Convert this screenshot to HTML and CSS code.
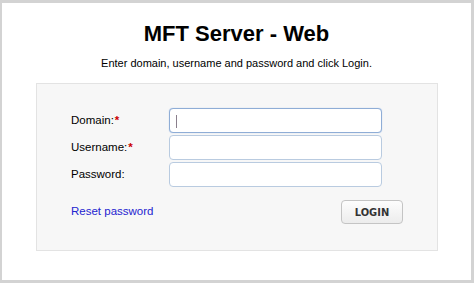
FILE: index.html
```html
<!DOCTYPE html>
<html lang="en">
<head>
    <meta charset="UTF-8">
    <title>MFT Server - Web</title>
    <link rel="stylesheet" href="styles.css">
</head>
<body>
<div id="page">
    <h1>MFT Server - Web</h1>
    <p class="intro">Enter domain, username and password and click Login.</p>
    <form class="login-box" action="javascript:;">
        <div class="fields">
            <label for="domain">Domain:<span class="req">*</span></label>
            <input type="text" id="domain" class="f-text focus">
            <label for="user">Username:<span class="req">*</span></label>
            <input type="text" id="user" class="f-text">
            <label for="pass">Password:</label>
            <input type="password" id="pass" class="f-text">
        </div>
        <div class="actions">
            <a href="javascript:;" class="reset">Reset password</a>
            <button type="submit" class="btn-login">LOGIN</button>
        </div>
    </form>
</div>
</body>
</html>
```

FILE: styles.css
```css
*{
    margin : 0;
    padding: 0;
    box-sizing: border-box;
}
body{
    font: 12px/1.5 "Liberation Sans", Arial, sans-serif;
    color: #000;
    background: #fff;
}
#page{
    width : 474px;
    height: 283px;
    border: 3px solid #d3d3d3;
    border-left-width: 2px;
    padding-top: 17px;
    background: #fff;
}
#page h1{
    text-align: center;
    font: 700 22px/28px "Liberation Sans", Arial, sans-serif;
}
#page .intro{
    text-align: center;
    margin-top: 7px;
    font-size: 11px;
    line-height: 16px;
}
.login-box{
    width : 402px;
    margin: 12px 0 0 34px;
    padding: 24px 34px 26px;
    background: #f7f7f7;
    border: 1px solid #e3e3e3;
}
.fields{
    display: grid;
    grid-template-columns: 98px 213px;
    row-gap: 2px;
    align-items: center;
}
.fields label{
    font-size: 11.5px;
}
.req{
    color: #c00;
    font-weight: 700;
    margin-left: 1px;
}
.f-text{
    height: 25px;
    border: 1px solid #b9cbe0;
    border-radius: 4px;
    background: #fff;
    outline: none;
    padding: 0 6px;
    font: 12px "Liberation Sans", Arial, sans-serif;
}
.f-text.focus{
    border-color: #8fadd6;
    box-shadow: 0 0 1px #9fbde6;
    background: #fff linear-gradient(#8a7f8c, #8a7f8c) no-repeat 6px 6px / 1px 13px;
}
.actions{
    display: flex;
    justify-content: space-between;
    align-items: center;
    margin-top: 13px;
}
.reset{
    color: #2424d0;
    text-decoration: none;
    font-size: 11.5px;
}
.btn-login{
    width : 62px;
    height: 24px;
    border: 1px solid #c4c4c4;
    border-radius: 4px;
    background: linear-gradient(#fdfdfd, #ececec);
    color: #333;
    font: 700 11px "DejaVu Sans Condensed", "DejaVu Sans", sans-serif;
}
```
